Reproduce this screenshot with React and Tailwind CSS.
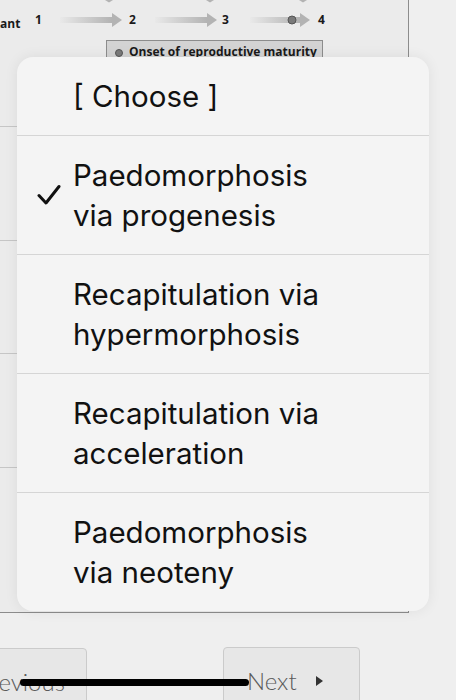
import React from 'react';

const OPTIONS = [
  { label: '[ Choose ]' },
  { label: 'Paedomorphosis via progenesis', lines: ['Paedomorphosis', 'via progenesis'], checked: true },
  { lines: ['Recapitulation via', 'hypermorphosis'] },
  { lines: ['Recapitulation via', 'acceleration'] },
  { lines: ['Paedomorphosis', 'via neoteny'] },
];

function Arrow({ id, width, dot }) {
  const bar = width - 10;
  return (
    <svg width={width} height="16" viewBox={`0 0 ${width} 16`} className="shrink-0">
      <defs>
        <linearGradient id={id} x1="0" x2="1" y1="0" y2="0">
          <stop offset="0" stopColor="#e9e9e9" />
          <stop offset="1" stopColor="#b3b3b3" />
        </linearGradient>
      </defs>
      <rect x="0" y="5" width={bar} height="6" fill={`url(#${id})`} />
      <polygon points={`${bar},1 ${width},8 ${bar},15`} fill="#b3b3b3" />
      {dot && <circle cx={bar - 8} cy="8" r="4" fill="#7a7a7a" stroke="#555" strokeWidth="1" />}
    </svg>
  );
}

function Num({ children, className }) {
  return <span className={`shrink-0 text-[12px] font-bold text-[#1a1a1a] ${className}`}>{children}</span>;
}

function Check() {
  return (
    <svg width="24" height="22" viewBox="0 0 24 22" className="shrink-0">
      <path d="M2 11.5 L9 19 L22 2.5" fill="none" stroke="#111" strokeWidth="3" strokeLinecap="round" strokeLinejoin="round" />
    </svg>
  );
}

export default function App() {
  return (
    <div className="relative h-[700px] w-[456px] overflow-hidden bg-[#efefef] font-['Open_Sans',sans-serif]">
      {/* page behind the picker */}
      <div className="h-[613px] w-[409px] border-r border-b border-[#8c8c8c] bg-[#ebebeb]">
        <div className="h-[127px] border-b border-[#c6c6c6]">
          {/* tips of the row above */}
          <svg width="400" height="4" className="block">
            <polygon points="105,0 113,0 109,2.5" fill="#b3b3b3" />
            <polygon points="206,0 214,0 210,2.5" fill="#b3b3b3" />
            <polygon points="299,0 307,0 303,2.5" fill="#b3b3b3" />
          </svg>
          <div className="mt-[8px] flex h-[16px] items-center">
            <span className="w-[35px] shrink-0 pt-[8px] text-[12px] font-bold text-[#1a1a1a]">ant</span>
            <Num className="w-[25px]">1</Num>
            <Arrow id="a1" width={62} />
            <Num className="ml-[7px] w-[26px]">2</Num>
            <Arrow id="a2" width={62} />
            <Num className="ml-[5px] w-[28px]">3</Num>
            <Arrow id="a3" width={60} dot />
            <Num className="ml-[8px]">4</Num>
          </div>
          <div className="ml-[106px] mt-[12px] flex h-[30px] w-[217px] items-start gap-[6px] border border-[#8c8c8c] bg-[#d3d3d3] pl-[8px] pt-[3px]">
            <span className="mt-[5px] h-[8px] w-[8px] shrink-0 rounded-full border border-[#555] bg-[#7a7a7a]" />
            <span className="text-[12px] font-bold leading-[16px] text-[#1a1a1a]">Onset of reproductive maturity</span>
          </div>
        </div>
        <div className="h-[114px] border-b border-[#c6c6c6]" />
        <div className="h-[113px] border-b border-[#c6c6c6]" />
        <div className="h-[114px] border-b border-[#c6c6c6]" />
      </div>

      {/* nav buttons */}
      <div className="mt-[35px] flex font-['Lato',sans-serif]">
        <div className="ml-[-46px] h-[60px] w-[133px] shrink-0 rounded-[4px] border border-[#cbcbcb] bg-[#e7e7e7] pl-[22px] pt-[19px] text-[24px] font-light leading-[28px] text-[#5a5a5a]">
          Previous
        </div>
        <div className="ml-[136px] mt-[-1px] flex h-[60px] w-[137px] shrink-0 items-start gap-[19px] rounded-[4px] border border-[#cbcbcb] bg-[#e7e7e7] pl-[23px] pt-[19px] text-[24px] font-light leading-[28px] text-[#5a5a5a]">
          <span>Next</span>
          <span className="mt-[9px] h-0 w-0 border-y-[5px] border-l-[7px] border-y-transparent border-l-[#333]" />
        </div>
      </div>

      {/* home indicator bar */}
      <div className="absolute left-[20px] top-[679px] h-[7px] w-[229px] rounded-full bg-black" />

      {/* picker menu */}
      <div className="absolute left-[17px] top-[57px] w-[412px] overflow-hidden rounded-[16px] bg-[#f4f4f4] font-['Inter',sans-serif] text-[29.5px] leading-[40px] text-[#111] shadow-[0_0_14px_rgba(0,0,0,0.07)]">
        {OPTIONS.map((o, i) => (
          <div
            key={i}
            className={`relative flex items-center py-[19px] pl-[56px] ${i < OPTIONS.length - 1 ? 'border-b border-[#d5d5d5]' : ''}`}
          >
            {o.checked && (
              <span className="absolute left-[20px] top-1/2 -translate-y-1/2">
                <Check />
              </span>
            )}
            <div>
              {o.lines ? o.lines.map((l) => <div key={l}>{l}</div>) : <div>{o.label}</div>}
            </div>
          </div>
        ))}
      </div>
    </div>
  );
}
